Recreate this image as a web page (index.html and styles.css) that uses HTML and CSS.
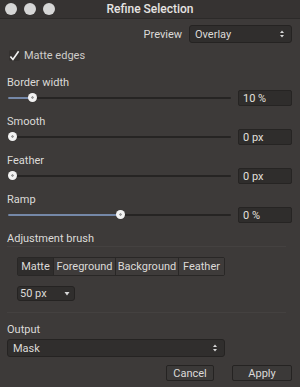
FILE: index.html
```html
<!DOCTYPE html>
<html>

<head>
  <title>Refine Selection</title>
  <link rel="stylesheet" href="styles.css">
</head>

<body>
  <div class="window">
    <div class="titlebar">
      <div class="lights"><i></i><i></i><i></i></div>
      <div class="title">Refine Selection</div>
    </div>

    <div class="content">
      <div class="preview-row">
        <span class="preview-label">Preview</span>
        <div class="select preview-select">
          <span>Overlay</span>
          <svg class="updown" width="6" height="10" viewBox="0 0 6 10">
            <path d="M1 4 L3 1.5 L5 4 Z M1 6 L3 8.5 L5 6 Z" fill="#d8d8d8" />
          </svg>
        </div>
      </div>

      <div class="check-row">
        <span class="checkbox">
          <svg width="12" height="12" viewBox="0 0 12 12">
            <path d="M1.5 6.5 L4.3 9.8 L10.5 0.8" fill="none" stroke="#f0f0f0" stroke-width="1.8" />
          </svg>
        </span>
        <span>Matte edges</span>
      </div>

      <div class="group first">
        <div class="label">Border width</div>
        <div class="slider-row">
          <div class="slider">
            <div class="fill" style="width: 24px"></div>
            <div class="thumb" style="left: 24px"></div>
          </div>
          <div class="field">10 %</div>
        </div>
      </div>

      <div class="group">
        <div class="label">Smooth</div>
        <div class="slider-row">
          <div class="slider">
            <div class="thumb" style="left: 4px"></div>
          </div>
          <div class="field">0 px</div>
        </div>
      </div>

      <div class="group">
        <div class="label">Feather</div>
        <div class="slider-row">
          <div class="slider">
            <div class="thumb" style="left: 4px"></div>
          </div>
          <div class="field">0 px</div>
        </div>
      </div>

      <div class="group">
        <div class="label">Ramp</div>
        <div class="slider-row">
          <div class="slider">
            <div class="fill" style="width: 112px"></div>
            <div class="thumb" style="left: 112px"></div>
          </div>
          <div class="field">0 %</div>
        </div>
      </div>

      <div class="section-label">Adjustment brush</div>
      <div class="divider"></div>

      <div class="segmented">
        <span class="seg active">Matte</span>
        <span class="seg">Foreground</span>
        <span class="seg">Background</span>
        <span class="seg">Feather</span>
      </div>

      <div class="select size-select">
        <span>50 px</span>
        <svg width="6" height="5" viewBox="0 0 6 5">
          <path d="M0.5 1 L5.5 1 L3 4.5 Z" fill="#d8d8d8" />
        </svg>
      </div>

      <div class="divider lower"></div>

      <div class="output-label">Output</div>
      <div class="select output-select">
        <span>Mask</span>
        <svg class="updown" width="6" height="10" viewBox="0 0 6 10">
          <path d="M1 4 L3 1.5 L5 4 Z M1 6 L3 8.5 L5 6 Z" fill="#d8d8d8" />
        </svg>
      </div>

      <div class="buttons">
        <button class="btn cancel">Cancel</button>
        <button class="btn apply">Apply</button>
      </div>
    </div>
  </div>
</body>

</html>
```

FILE: styles.css
```css
body {
  margin: 0;
  background-color: #3d3a39;
  font-family: Roboto, "Liberation Sans", Arial, sans-serif;
  font-size: 11px;
  color: #dcdad8;
}

.window {
  width: 300px;
  height: 387px;
  overflow: hidden;
}

.titlebar {
  height: 18px;
  background-color: #363332;
  border-bottom: 1px solid #2c2a29;
  display: flex;
  align-items: center;
  position: relative;
}

.lights {
  display: flex;
  gap: 7px;
  padding-left: 5px;
}

.lights i {
  width: 12px;
  height: 12px;
  border-radius: 50%;
  background-color: #d6d6d6;
}

.title {
  position: absolute;
  left: 0;
  right: 0;
  text-align: center;
  font-size: 12px;
  font-weight: 500;
  color: #e6e4e2;
}

.content {
  padding: 6px 8px 0 7px;
}

.preview-row {
  display: flex;
  justify-content: flex-end;
  align-items: center;
  gap: 7px;
}

.select {
  display: flex;
  align-items: center;
  justify-content: space-between;
  box-sizing: border-box;
  background-color: #302e2d;
  border: 1px solid #252322;
  border-radius: 3px;
  padding: 0 6px 0 5px;
}

.preview-select {
  width: 103px;
  height: 18px;
}

.check-row {
  display: flex;
  align-items: center;
  gap: 4px;
  margin-top: 5px;
  height: 14px;
  color: #cfcdcb;
}

.checkbox {
  width: 11px;
  height: 11px;
  display: flex;
  margin-left: 2px;
  background-color: #343130;
  border-radius: 2px;
}

.group {
  margin-top: 9px;
}

.group.first {
  margin-top: 14px;
}

.label,
.section-label,
.output-label {
  height: 14px;
  line-height: 14px;
}

.slider-row {
  display: flex;
  align-items: center;
  gap: 7px;
}

.slider {
  position: relative;
  flex: 1;
  height: 2px;
  margin-left: 1px;
  background-color: #262423;
  border-radius: 1px;
}

.fill {
  height: 2px;
  background-color: #7588a8;
  border-radius: 1px;
}

.thumb {
  position: absolute;
  top: -4px;
  width: 9px;
  height: 9px;
  margin-left: -4px;
  border-radius: 50%;
  background: radial-gradient(circle, #9a9a9a 0 1px, #f2f2f2 1.5px);
}

.field {
  width: 54px;
  height: 16px;
  line-height: 16px;
  box-sizing: border-box;
  padding-left: 4px;
  background-color: #2f2d2c;
  border: 1px solid #262423;
  border-radius: 2px;
  color: #e2e0de;
}

.section-label {
  margin-top: 9px;
}

.divider {
  height: 1px;
  background-color: #444140;
  margin: 0 6px 0 0;
}

.segmented {
  display: flex;
  width: 208px;
  margin: 10px 0 0 10px;
  height: 19px;
  box-sizing: border-box;
  border: 1px solid #292726;
  border-radius: 2px;
}

.seg {
  display: flex;
  align-items: center;
  justify-content: center;
  background-color: #3e3b3a;
  border-left: 1px solid #292726;
  flex: none;
}

.seg:first-child {
  border-left: none;
}

.seg:nth-child(1) { width: 35px; }
.seg:nth-child(2) { width: 61px; }
.seg:nth-child(3) { width: 62px; }
.seg:nth-child(4) { flex: 1; }

.seg.active {
  background-color: #2f2d2c;
}

.size-select {
  width: 58px;
  height: 15px;
  margin: 10px 0 0 10px;
  padding: 0 4px 0 2px;
}

.divider.lower {
  margin-top: 11px;
}

.output-label {
  margin-top: 10px;
}

.output-select {
  width: 218px;
  height: 18px;
  margin-top: 2px;
  padding-left: 5px;
}

.buttons {
  display: flex;
  justify-content: flex-end;
  gap: 18px;
  margin-top: 8px;
}

.btn {
  height: 16px;
  padding: 0;
  font-family: inherit;
  font-size: 11px;
  color: #dcdad8;
  background-color: #3b3938;
  border: 1px solid #252322;
  border-radius: 2px;
}

.cancel {
  width: 48px;
}

.apply {
  width: 60px;
}
```
